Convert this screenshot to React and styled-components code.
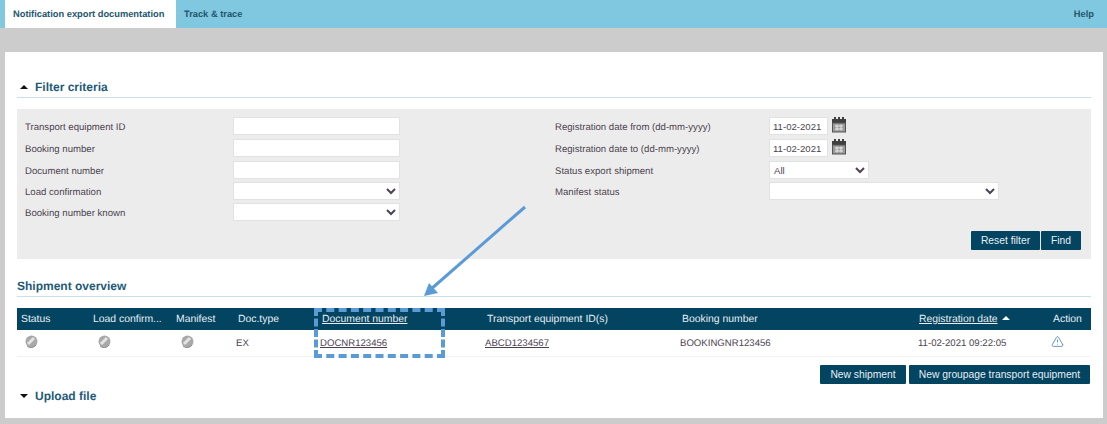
import React from "react";
import styled, { createGlobalStyle } from "styled-components";
import { TriangleAlert } from "lucide-react";

const GlobalStyle = createGlobalStyle`
    html, body {
        margin: 0;
        background: #cccccc;
        font-family: "Liberation Sans", Arial, sans-serif;
        font-size: 9.6px;
        color: #4c4450;
        text-rendering: geometricPrecision;
    }
`;

const navy = "#034461";

const Page = styled.div`
    position: relative;
    width: 1107px;
    height: 424px;
    overflow: hidden;
`;
const TopBar = styled.div`
    display: flex;
    align-items: stretch;
    height: 28px;
    padding: 0 5px;
    background: #7fc8df;
    font-size: 9.3px;
    font-weight: bold;
    color: #24566e;
`;
const Tab = styled.div`
    display: flex;
    align-items: center;
    flex-shrink: 0;
    padding: 0 9px 0 8px;
    white-space: nowrap;
    background: ${p => (p.$active ? "#ffffff" : "transparent")};
    width: ${p => (p.$active ? "171px" : "auto")};
    box-sizing: border-box;
`;
const HelpLink = styled.div`
    display: flex;
    align-items: center;
    margin-left: auto;
    margin-right: 8px;
`;
const Card = styled.div`
    margin: 24px 4px 0 5px;
    height: 366px;
    padding: 24px 12px 0;
    background: #ffffff;
    box-sizing: border-box;
`;
const SectionTitle = styled.h2`
    display: flex;
    align-items: center;
    gap: 7px;
    height: 21px;
    margin: ${p => p.$top || 0}px 0 0;
    padding-left: ${p => (p.$plain ? 0 : 3)}px;
    font-size: 12px;
    font-weight: bold;
    color: #1f5a78;
    border-bottom: ${p => (p.$rule ? "1px solid #c9e0e8" : "none")};
`;
const Caret = styled.span`
    width: 0;
    height: 0;
    border-left: 4px solid transparent;
    border-right: 4px solid transparent;
    border-${p => (p.$down ? "top" : "bottom")}: 4px solid #111111;
`;
const FilterPanel = styled.div`
    height: 150px;
    margin-top: 11px;
    padding: 8px 9px 9px 8px;
    background: #ececec;
    box-sizing: border-box;
    display: flex;
    flex-direction: column;
`;
const FilterColumns = styled.div`
    display: flex;
    flex: 1;
`;
const FilterColumn = styled.div`
    flex: 0 0 ${p => p.$width}px;
`;
const FieldRow = styled.div`
    display: grid;
    grid-template-columns: ${p => p.$label}px 1fr;
    align-items: start;
    height: ${p => p.$height || 22}px;
`;
const Label = styled.label`
    line-height: 21px;
`;
const TextInput = styled.input`
    display: block;
    width: ${p => p.$width}px;
    height: 18px;
    padding: 0 3px;
    box-sizing: border-box;
    border: 1px solid #e2e2e2;
    background: #ffffff;
    font-family: inherit;
    font-size: 9.6px;
    color: #4c4450;
    outline: none;
`;
const Select = styled.select`
    display: block;
    width: ${p => p.$width}px;
    height: 18px;
    box-sizing: border-box;
    border: 1px solid #e2e2e2;
    border-radius: 0;
    background: #ffffff;
    font-family: inherit;
    font-size: 9.6px;
    color: #4c4450;
`;
const DateField = styled.div`
    display: flex;
    align-items: flex-start;
    gap: 4px;
`;
const ButtonRow = styled.div`
    display: flex;
    justify-content: flex-end;
    gap: ${p => p.$gap}px;
    margin-right: ${p => p.$right || 0}px;
    margin-top: ${p => p.$top || 0}px;
`;
const Button = styled.button`
    height: 19px;
    width: ${p => p.$width}px;
    padding: 0;
    border: none;
    border-radius: 1px;
    background: ${navy};
    color: #e6eef2;
    font-family: inherit;
    font-size: 10.3px;
    white-space: nowrap;
`;
const Table = styled.div`
    margin-top: 11px;
`;
const Columns = styled.div`
    display: grid;
    grid-template-columns: 72px 83px 62px 84px 165px 195px 237px 134px 41px;
    align-items: center;
    height: ${p => p.$height}px;
    background: ${p => (p.$head ? navy : "#ffffff")};
    color: ${p => (p.$head ? "#e6eef2" : "#4c4450")};
    font-size: ${p => (p.$head ? "10.4px" : "9.6px")};
    border-bottom: ${p => (p.$head ? "none" : "1px solid #f2f2f2")};
`;
const HeadCell = styled.div`
    padding-left: 4px;
    white-space: nowrap;
    text-decoration: ${p => (p.$sort ? "underline" : "none")};
`;
const Cell = styled.div`
    padding-left: ${p => p.$inset || 2}px;
    white-space: nowrap;
`;
const BallCell = styled(Cell)`
    display: flex;
    margin-bottom: 4px;
`;
const DataLink = styled.a`
    color: #4f3f55;
    text-decoration: underline;
`;
const SortArrow = styled.span`
    display: inline-block;
    width: 0;
    height: 0;
    margin-left: 4px;
    margin-bottom: 2px;
    border-left: 4px solid transparent;
    border-right: 4px solid transparent;
    border-bottom: 4px solid #ffffff;
`;
const Highlight = styled.div`
    position: absolute;
    left: 314px;
    top: 308px;
    width: 131px;
    height: 50px;
    box-sizing: border-box;
    border: 4px dashed #5b9bd5;
`;
const Arrow = styled.svg`
    position: absolute;
    left: 415px;
    top: 200px;
`;

const StatusBall = () => (
    <svg width="13" height="13" viewBox="0 0 13 13">
        <circle cx="6.5" cy="6.5" r="6" fill="#a9a9a9" />
        <path d="M3 9 L9 3" stroke="#e4e4e4" strokeWidth="3" />
        <path d="M2 11 A6 6 0 0 0 11 10" stroke="#8a8a8a" strokeWidth="1" fill="none" />
    </svg>
);

const CalendarIcon = () => (
    <svg width="14" height="16" viewBox="0 0 14 16">
        <rect x="0" y="2" width="14" height="4" fill="#3f3f3f" />
        <rect x="2" y="0" width="2" height="3" fill="#3f3f3f" />
        <rect x="6" y="0" width="2" height="3" fill="#3f3f3f" />
        <rect x="10" y="0" width="2" height="3" fill="#3f3f3f" />
        <rect x="0.5" y="6" width="13" height="9" fill="#9a9a9a" stroke="#555555" />
        <path d="M3 9h8M3 12h8M5 7.5v6M9 7.5v6" stroke="#e8e8e8" strokeWidth="1" />
    </svg>
);

const App = () => {
    return (
        <Page>
            <GlobalStyle />
            <TopBar>
                <Tab $active>Notification export documentation</Tab>
                <Tab>Track &amp; trace</Tab>
                <HelpLink>Help</HelpLink>
            </TopBar>
            <Card>
                <SectionTitle $rule>
                    <Caret />
                    Filter criteria
                </SectionTitle>
                <FilterPanel>
                    <FilterColumns>
                        <FilterColumn $width={530}>
                            <FieldRow $label={208}><Label>Transport equipment ID</Label><TextInput $width={167} /></FieldRow>
                            <FieldRow $label={208}><Label>Booking number</Label><TextInput $width={167} /></FieldRow>
                            <FieldRow $label={208} $height={21}><Label>Document number</Label><TextInput $width={167} /></FieldRow>
                            <FieldRow $label={208} $height={21}><Label>Load confirmation</Label><Select $width={167}><option></option></Select></FieldRow>
                            <FieldRow $label={208}><Label>Booking number known</Label><Select $width={167}><option></option></Select></FieldRow>
                        </FilterColumn>
                        <FilterColumn $width={530}>
                            <FieldRow $label={214}>
                                <Label>Registration date from (dd-mm-yyyy)</Label>
                                <DateField><TextInput $width={59} defaultValue="11-02-2021" /><CalendarIcon /></DateField>
                            </FieldRow>
                            <FieldRow $label={214}>
                                <Label>Registration date to (dd-mm-yyyy)</Label>
                                <DateField><TextInput $width={59} defaultValue="11-02-2021" /><CalendarIcon /></DateField>
                            </FieldRow>
                            <FieldRow $label={214} $height={21}><Label>Status export shipment</Label><Select $width={100}><option>All</option></Select></FieldRow>
                            <FieldRow $label={214} $height={21}><Label>Manifest status</Label><Select $width={230}><option></option></Select></FieldRow>
                        </FilterColumn>
                    </FilterColumns>
                    <ButtonRow $gap={1} $right={1}>
                        <Button $width={69}>Reset filter</Button>
                        <Button $width={40}>Find</Button>
                    </ButtonRow>
                </FilterPanel>
                <SectionTitle $rule $plain $top={16}>Shipment overview</SectionTitle>
                <Table>
                    <Columns $head $height={22}>
                        <HeadCell>Status</HeadCell>
                        <HeadCell>Load confirm...</HeadCell>
                        <HeadCell>Manifest</HeadCell>
                        <HeadCell>Doc.type</HeadCell>
                        <HeadCell $sort>Document number</HeadCell>
                        <HeadCell>Transport equipment ID(s)</HeadCell>
                        <HeadCell>Booking number</HeadCell>
                        <HeadCell><u>Registration date</u><SortArrow /></HeadCell>
                        <HeadCell>Action</HeadCell>
                    </Columns>
                    <Columns $height={26}>
                        <BallCell $inset={8}><StatusBall /></BallCell>
                        <BallCell $inset={9}><StatusBall /></BallCell>
                        <BallCell $inset={9}><StatusBall /></BallCell>
                        <Cell>EX</Cell>
                        <Cell><DataLink>DOCNR123456</DataLink></Cell>
                        <Cell><DataLink>ABCD1234567</DataLink></Cell>
                        <Cell>BOOKINGNR123456</Cell>
                        <Cell $inset={3}>11-02-2021 09:22:05</Cell>
                        <Cell><TriangleAlert size={13} color="#4a7fb5" strokeWidth={1.5} /></Cell>
                    </Columns>
                </Table>
                <ButtonRow $gap={3} $right={1} $top={8}>
                    <Button $width={86}>New shipment</Button>
                    <Button $width={181}>New groupage transport equipment</Button>
                </ButtonRow>
                <SectionTitle $top={1}>
                    <Caret $down />
                    Upload file
                </SectionTitle>
            </Card>
            <Highlight />
            <Arrow width="120" height="100" viewBox="0 0 120 100">
                <path d="M110 7 L15 90" stroke="#5b9bd5" strokeWidth="3" fill="none" />
                <path d="M9 96 L14 83 L23 93 Z" fill="#5b9bd5" />
            </Arrow>
        </Page>
    );
};

export default App;
